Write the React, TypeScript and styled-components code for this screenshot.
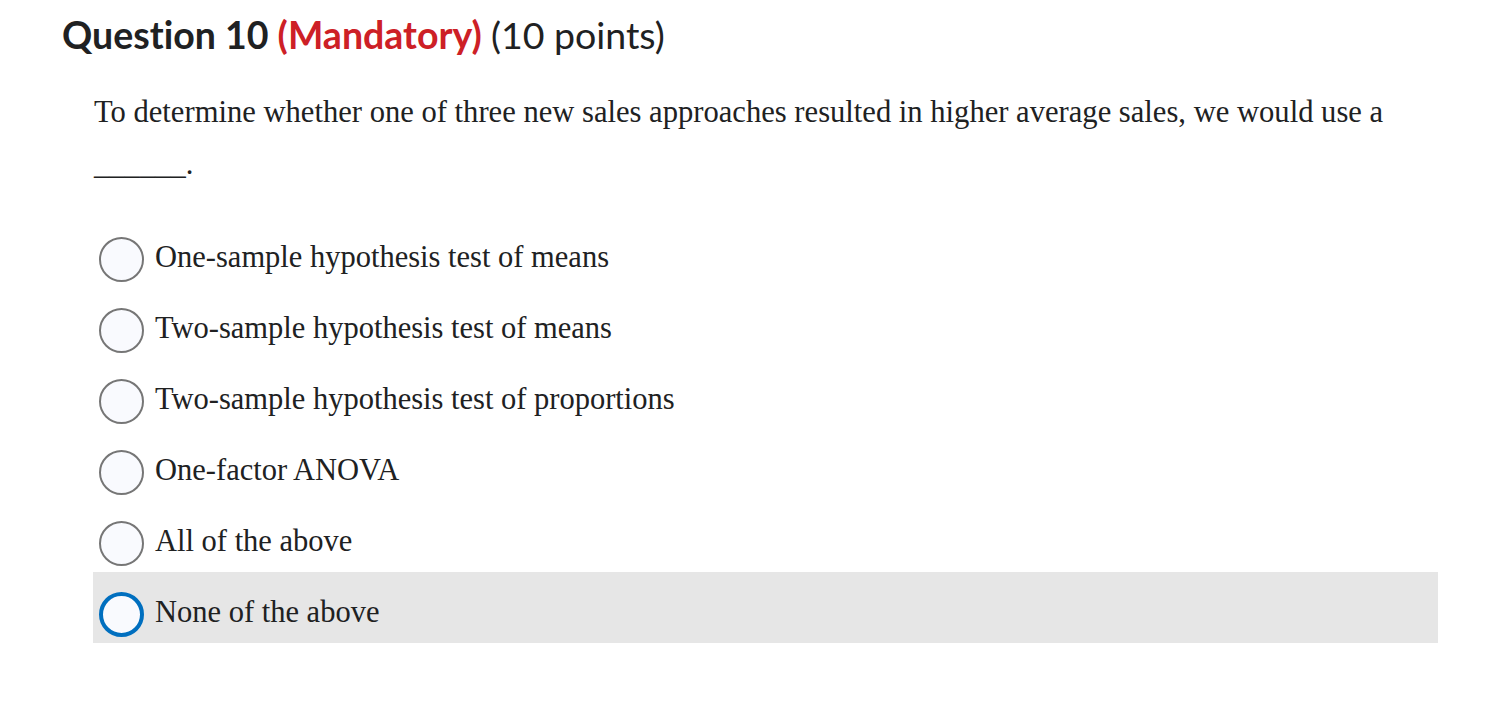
import React from 'react';
import styled, { createGlobalStyle } from 'styled-components';

const GlobalStyle = createGlobalStyle`
	body {
		margin: 0;
		background: #ffffff;
	}
`;

const Page = styled.div`
	padding: 12px 57px 0 62px;
`;

const Heading = styled.h2`
	margin: 0;
	font-family: Lato, 'Liberation Sans', sans-serif;
	font-size: 37.5px;
	font-weight: 700;
	color: #202122;
	line-height: 46px;
	font-variant-ligatures: none;
	.mandatory {
		color: #cd2026;
	}
	.points {
		font-weight: 400;
	}
`;

const Body = styled.div`
	padding-left: 31px;
`;

const Prompt = styled.p`
	margin: 28px 0 0 0;
	padding-left: 1px;
	font-family: 'Liberation Serif', serif;
	font-size: 30.6px;
	line-height: 52px;
	color: #202122;
`;

const Options = styled.div`
	margin-top: 27px;
	display: flex;
	flex-direction: column;
`;

const Option = styled.label<{ $focused?: boolean }>`
	box-sizing: border-box;
	display: flex;
	align-items: center;
	gap: 11px;
	height: 71px;
	padding: 14px 0 0 6px;
	background: ${(p) => (p.$focused ? '#e6e6e6' : 'transparent')};
	font-family: 'Liberation Serif', serif;
	font-size: 30.5px;
	color: #202122;
	cursor: pointer;
`;

const OptionText = styled.span`
	margin-bottom: 4px;
`;

const Radio = styled.span<{ $focused?: boolean }>`
	box-sizing: border-box;
	width: 45px;
	height: 45px;
	border-radius: 50%;
	background: #f9fafe;
	border: ${(p) => (p.$focused ? '4px solid #006fbf' : '2px solid #767676')};
	flex-shrink: 0;
`;

const choices = [
	'One-sample hypothesis test of means',
	'Two-sample hypothesis test of means',
	'Two-sample hypothesis test of proportions',
	'One-factor ANOVA',
	'All of the above',
	'None of the above',
];

const App = () => {
	return (
		<>
			<GlobalStyle />
			<Page>
				<Heading>
					Question 10 <span className="mandatory">(Mandatory)</span>{' '}
					<span className="points">(10 points)</span>
				</Heading>
				<Body>
					<Prompt>
						To determine whether one of three new sales approaches resulted in higher average sales, we would use a
						______.
					</Prompt>
					<Options>
						{choices.map((c, i) => (
							<Option key={c} $focused={i === choices.length - 1}>
								<Radio $focused={i === choices.length - 1} />
								<OptionText>{c}</OptionText>
							</Option>
						))}
					</Options>
				</Body>
			</Page>
		</>
	);
};

export default App;
